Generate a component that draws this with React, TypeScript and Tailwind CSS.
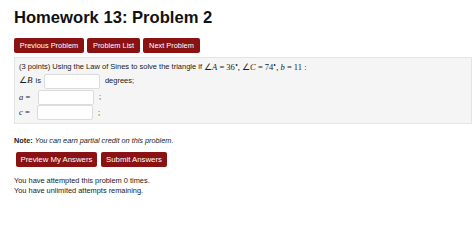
export default function App() {
  const sans = { fontFamily: '"Liberation Sans", Arial, sans-serif' };
  const serif = { fontFamily: '"Liberation Serif", "Times New Roman", serif' };
  const btn =
    "h-[15px] flex items-center justify-center rounded-[2px] bg-[#8a1212] text-white text-[7.4px] leading-none";
  const input =
    "h-[15px] w-[56px] bg-white border border-[#dcdcdc] rounded-[2px]";

  return (
    <div className="w-[474px] h-[205px] bg-white text-[#1a1a1a] pl-[14px] overflow-hidden" style={sans}>
      <h1 className="pt-[8px] h-[28px] text-[16.6px] leading-[20px] font-bold text-[#111]">
        Homework 13: Problem 2
      </h1>

      <div className="mt-[10px] flex gap-[3px]">
        <div className={`${btn} w-[70px]`}>Previous Problem</div>
        <div className={`${btn} w-[53px]`}>Problem List</div>
        <div className={`${btn} w-[57px]`}>Next Problem</div>
      </div>

      <div className="mt-[4px] w-[458px] h-[67px] bg-[#f5f5f5] border border-[#e4e4e4] pl-[4px] pt-[3px] text-[7.5px]">
        <div className="h-[12px] flex items-center">
          <span>(3 points) Using the Law of Sines to solve the triangle if&nbsp;</span>
          <span className="text-[8.5px]" style={serif}>
            ∠<i>A</i> = 36<sup className="text-[5px]">∘</sup>, ∠<i>C</i> = 74<sup className="text-[5px]">∘</sup>, <i>b</i> = 11 :
          </span>
        </div>
        <div className="h-[16px] flex items-center">
          <span className="text-[9px]" style={serif}>∠<i>B</i></span>
          <span className="ml-[3px]">is</span>
          <span className={`${input} ml-[3px]`} />
          <span className="ml-[5px]">degrees;</span>
        </div>
        <div className="h-[16px] flex items-center">
          <span className="text-[8.5px] w-[19px]" style={serif}><i>a</i> =</span>
          <span className={input} />
          <span className="ml-[5px]">;</span>
        </div>
        <div className="h-[15px] flex items-center">
          <span className="text-[8.5px] w-[18px]" style={serif}><i>c</i> =</span>
          <span className={input} />
          <span className="ml-[5px]">;</span>
        </div>
      </div>

      <div className="mt-[12px] h-[10px] text-[7.3px] leading-[10px]">
        <b>Note:</b> <i>You can earn partial credit on this problem.</i>
      </div>

      <div className="mt-[6px] ml-[2px] flex gap-[4px]">
        <div className={`${btn} w-[81px] text-[7.8px]`}>Preview My Answers</div>
        <div className={`${btn} w-[66px] text-[7.8px]`}>Submit Answers</div>
      </div>

      <div className="mt-[9px] text-[7.4px] leading-[10px]">
        <div>You have attempted this problem 0 times.</div>
        <div>You have unlimited attempts remaining.</div>
      </div>
    </div>
  );
}
